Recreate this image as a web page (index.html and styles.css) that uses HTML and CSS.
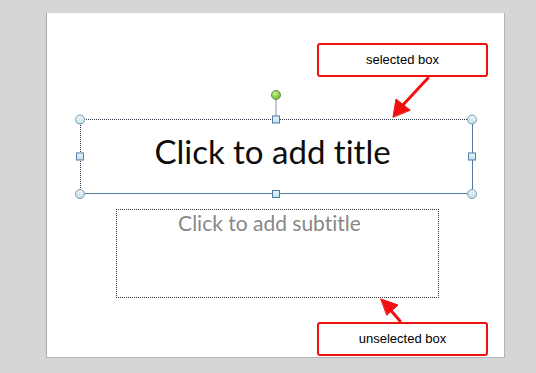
FILE: index.html
```html
<!DOCTYPE html>
<html lang="en">
<head>
  <meta charset="UTF-8" />
  <title>Slide placeholders</title>
  <link rel="stylesheet" href="styles.css">
</head>
<body>
  <div class="slide">
    <div class="title-box">Click to add title</div>
    <div class="subtitle-box">Click to add subtitle</div>
  </div>

  <div class="note note-top">selected box</div>
  <div class="note note-bottom">unselected box</div>

  <!-- selection handles and arrows drawn over the slide -->
  <svg class="overlay" width="536" height="373" viewBox="0 0 536 373">
    <defs>
      <linearGradient id="knob" x1="0" y1="0" x2="0" y2="1">
        <stop offset="0" stop-color="#eef8fb" />
        <stop offset="1" stop-color="#bfe0ea" />
      </linearGradient>
      <radialGradient id="green" cx="0.4" cy="0.35" r="0.7">
        <stop offset="0" stop-color="#c8f58a" />
        <stop offset="1" stop-color="#5fb626" />
      </radialGradient>
    </defs>

    <line x1="276" y1="99" x2="276" y2="119" stroke="#7d93b2" stroke-width="1" />
    <circle cx="276" cy="95" r="4.5" fill="url(#green)" stroke="#6a8f5a" stroke-width="1" />

    <g fill="url(#knob)" stroke="#7f97ad" stroke-width="1">
      <circle cx="80" cy="119.5" r="4.5" />
      <circle cx="472" cy="119.5" r="4.5" />
      <circle cx="80" cy="194" r="4.5" />
      <circle cx="472" cy="194" r="4.5" />
    </g>
    <g fill="url(#knob)" stroke="#4f7ba8" stroke-width="1">
      <rect x="272.5" y="116" width="7" height="7" />
      <rect x="272.5" y="190.5" width="7" height="7" />
      <rect x="76.5" y="153" width="7" height="7" />
      <rect x="468.5" y="153" width="7" height="7" />
    </g>

    <g stroke="#f01010" stroke-width="3" fill="#f01010" stroke-linecap="round">
      <line x1="428" y1="78" x2="402" y2="106" />
      <polygon points="393,117 396,99 410,110" stroke-width="1" stroke-linejoin="round" />
      <line x1="400" y1="321" x2="388" y2="307" />
      <polygon points="381,299 398,305 387,315" stroke-width="1" stroke-linejoin="round" />
    </g>
  </svg>
</body>
</html>
```

FILE: styles.css
```css
* { box-sizing: border-box; margin: 0; padding: 0; }
body {
  width: 536px;
  height: 373px;
  background: #d6d6d6;
  position: relative;
  overflow: hidden;
  padding: 13px 0 0 46px;
}
.slide {
  width: 459px;
  height: 345px;
  background: white;
  border-left: 1px solid #a9a9a9;
  border-right: 1px solid #b4b4b4;
  border-bottom: 1px solid #b4b4b4;
  padding: 106px 0 0 33px;
}
.title-box,
.subtitle-box {
  font-family: Lato, "Open Sans", sans-serif;
  font-variant-ligatures: none;
  text-align: center;
}
.title-box {
  width: 393px;
  height: 75px;
  border-top: 1px dotted #2a3440;
  border-left: 1px dotted #2a3440;
  border-right: 1px solid #4f7ba8;
  border-bottom: 1px solid #4f7ba8;
  font-size: 33px;
  color: #0c0c0c;
  padding: 11px 8px 0 0;
  line-height: 40px;
}
.subtitle-box {
  width: 323px;
  height: 89px;
  margin: 15px 0 0 36px;
  border: 1px dotted #333;
  font-size: 21px;
  color: #888;
  line-height: 24px;
  padding: 1px 16px 0 0;
}
.note {
  position: absolute;
  left: 317px;
  width: 171px;
  height: 34px;
  border: 2px solid #ee1111;
  border-radius: 3px;
  background: white;
  font-family: "Liberation Sans", Arial, sans-serif;
  font-size: 13px;
  color: #000;
  text-align: center;
  line-height: 30px;
}
.note-top { top: 43px; }
.note-bottom { top: 322px; }
.overlay {
  position: absolute;
  top: 0;
  left: 0;
}
```
